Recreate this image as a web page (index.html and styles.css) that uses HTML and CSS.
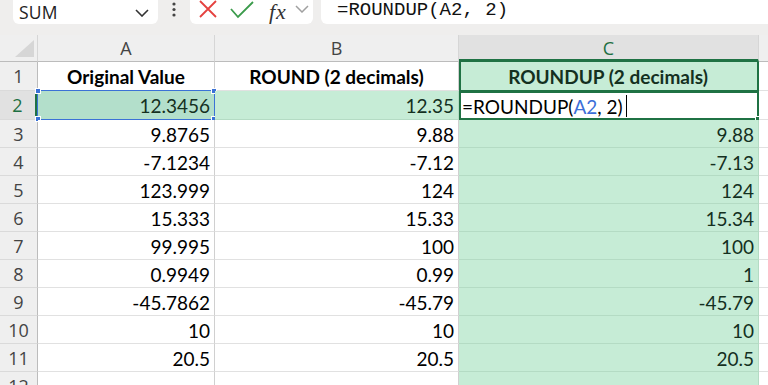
FILE: index.html
```html
<!DOCTYPE html>
<html>
<head>
<meta charset="utf-8">
<link rel="stylesheet" href="styles.css">
</head>
<body>
<div class="app">
  <div class="toolbar">
    <div class="namebox">
      <span class="nb-text">SUM</span>
      <svg class="nb-chev" width="14" height="8" viewBox="0 0 14 8"><polyline points="1,1 7,7 13,1" fill="none" stroke="#333" stroke-width="1.6"/></svg>
    </div>
    <div class="dots">
      <svg width="4" height="16" viewBox="0 0 4 16"><circle cx="2" cy="3" r="1.6" fill="#444"/><circle cx="2" cy="8.5" r="1.6" fill="#444"/><circle cx="2" cy="14" r="1.6" fill="#444"/></svg>
    </div>
    <div class="fxbox">
      <svg class="ic-x" width="18" height="18" viewBox="0 0 18 18"><path d="M1 1 L17 17 M17 1 L1 17" stroke="#e5413e" stroke-width="1.8" fill="none"/></svg>
      <svg class="ic-check" width="24" height="18" viewBox="0 0 24 18"><polyline points="1,8 8,16 23,1" fill="none" stroke="#3b9b4b" stroke-width="1.8"/></svg>
      <span class="fx">fx</span>
      <svg class="ic-chev" width="14" height="8" viewBox="0 0 14 8"><polyline points="1,1 7,7 13,1" fill="none" stroke="#a0a0a0" stroke-width="1.5"/></svg>
    </div>
    <div class="formula"><span class="f-text">=ROUNDUP(A2, 2)</span></div>
  </div>

  <div class="sheet">
    <div class="corner"><div class="tri"></div></div>
    <div class="colh">A</div>
    <div class="colh">B</div>
    <div class="colh colh-sel">C</div>
    <div class="colh colh-last"></div>

    <div class="rowh">1</div>
    <div class="cell hdr">Original Value</div>
    <div class="cell hdr">ROUND (2 decimals)</div>
    <div class="cell hdr mint c1">ROUNDUP (2 decimals)</div>
    <div class="cell dcol"></div>

    <div class="rowh rowh-sel">2</div>
    <div class="cell num a2">12.3456<span class="h h-tl"></span><span class="h h-tr"></span><span class="h h-bl"></span><span class="h h-br"></span></div>
    <div class="cell num mint">12.35</div>
    <div class="cell edit">=ROUNDUP(<span class="ref">A2</span>, 2)<span class="caret"></span><span class="fill"></span></div>
    <div class="cell dcol"></div>

    <div class="rowh">3</div><div class="cell num">9.8765</div><div class="cell num">9.88</div><div class="cell num mint">9.88</div><div class="cell dcol"></div>
    <div class="rowh">4</div><div class="cell num">-7.1234</div><div class="cell num">-7.12</div><div class="cell num mint">-7.13</div><div class="cell dcol"></div>
    <div class="rowh">5</div><div class="cell num">123.999</div><div class="cell num">124</div><div class="cell num mint">124</div><div class="cell dcol"></div>
    <div class="rowh">6</div><div class="cell num">15.333</div><div class="cell num">15.33</div><div class="cell num mint">15.34</div><div class="cell dcol"></div>
    <div class="rowh">7</div><div class="cell num">99.995</div><div class="cell num">100</div><div class="cell num mint">100</div><div class="cell dcol"></div>
    <div class="rowh">8</div><div class="cell num">0.9949</div><div class="cell num">0.99</div><div class="cell num mint">1</div><div class="cell dcol"></div>
    <div class="rowh">9</div><div class="cell num">-45.7862</div><div class="cell num">-45.79</div><div class="cell num mint">-45.79</div><div class="cell dcol"></div>
    <div class="rowh">10</div><div class="cell num">10</div><div class="cell num">10</div><div class="cell num mint">10</div><div class="cell dcol"></div>
    <div class="rowh">11</div><div class="cell num">20.5</div><div class="cell num">20.5</div><div class="cell num mint">20.5</div><div class="cell dcol"></div>
    <div class="rowh">12</div><div class="cell num"></div><div class="cell num"></div><div class="cell num mint"></div><div class="cell dcol"></div>
  </div>
</div>
</body>
</html>
```

FILE: styles.css
```css
* { box-sizing: border-box; }
html, body { margin: 0; padding: 0; }
body {
  width: 768px;
  height: 385px;
  overflow: hidden;
  background: #ffffff;
  font-family: "Open Sans", "Noto Sans", sans-serif;
}
.app { width: 768px; height: 385px; overflow: hidden; }

.toolbar {
  height: 35px;
  background: #efeeed;
  display: flex;
  align-items: flex-start;
}
.namebox {
  margin-left: 13px;
  margin-top: -6px;
  width: 145px;
  height: 30px;
  padding-top: 6px;
  background: #ffffff;
  border-radius: 6px;
  display: flex;
  align-items: center;
}
.nb-text {
  margin-left: 6px;
  font-size: 17.5px;
  color: #222;
  letter-spacing: 0.2px;
}
.nb-chev { margin-left: auto; margin-right: 9px; margin-top: 1px; }
.dots {
  width: 32px;
  height: 24px;
  display: flex;
  align-items: flex-start;
  justify-content: center;
  padding-top: 1px;
}
.fxbox {
  width: 123px;
  margin-top: -6px;
  height: 30px;
  padding-top: 6px;
  background: #ffffff;
  border-radius: 6px;
  display: flex;
  align-items: center;
}
.ic-x { margin-left: 9px; margin-top: -7px; }
.ic-check { margin-left: 13px; margin-top: -5px; }
.fx {
  margin-left: 15px;
  margin-top: 0;
  font-family: "Liberation Serif", serif;
  font-style: italic;
  font-size: 22px;
  line-height: 22px;
  color: #333;
  letter-spacing: 1px;
}
.ic-chev { margin-left: 8px; margin-top: -6px; }
.formula {
  margin-left: 8px;
  margin-top: -6px;
  flex: 1;
  height: 30px;
  padding-top: 6px;
  background: #ffffff;
  border-radius: 6px 0 0 6px;
  display: flex;
  align-items: center;
}
.f-text {
  margin-left: 16px;
  margin-top: -5px;
  font-family: "Liberation Mono", monospace;
  font-size: 19px;
  color: #111;
}

.sheet {
  display: grid;
  grid-template-columns: 38px 177px 244px 300px 9px;
  grid-template-rows: 27px 29px 29px 28px 28px 28px 28px 28px 28px 28px 28px 28px 28px;
  font-family: "Lato", "Open Sans", sans-serif;
  font-size: 19px;
}
.corner {
  background: #efefef;
  border-right: 1px solid #d6d6d6;
  border-bottom: 1px solid #bcbcbc;
  position: relative;
}
.tri {
  position: absolute;
  right: 3px;
  bottom: 4px;
  width: 0;
  height: 0;
  border-left: 19px solid transparent;
  border-bottom: 17px solid #d6d6d6;
}
.colh {
  background: #efefef;
  border-right: 1px solid #d6d6d6;
  border-bottom: 1px solid #bcbcbc;
  display: flex;
  align-items: center;
  justify-content: center;
  font-family: "Open Sans", sans-serif;
  font-size: 18px;
  color: #444;
}
.colh-sel {
  background: #e1e1e1;
  color: #1d6f42;
  border-bottom: 3px solid #1f7244;
  padding-top: 2px;
}
.colh-last { border-right: none; }
.rowh {
  background: #efefef;
  border-right: 1px solid #bcbcbc;
  border-bottom: 1px solid #dadada;
  display: flex;
  align-items: center;
  justify-content: center;
  font-family: "Open Sans", sans-serif;
  font-size: 18px;
  color: #444;
}
.rowh-sel {
  background: #e1e1e1;
  color: #1d6f42;
  border-right: 3px solid #1f7244;
}
.cell {
  background: #ffffff;
  border-right: 1px solid #d0d0d0;
  border-bottom: 1px solid #e1e1e1;
  display: flex;
  align-items: center;
  color: #000;
  white-space: nowrap;
  position: relative;
  padding: 1px 4px 0 4px;
}
.num { justify-content: flex-end; }
.hdr { justify-content: center; font-weight: 700; }
.mint {
  background: #c6ecd6;
  color: #14301f;
  border-bottom-color: #b4dbc4;
  border-right-color: #b4dbc4;
}
.c1 {
  border-left: 2px solid #1f7244;
  border-right: 2px solid #1f7244;
  border-bottom-color: #1f7244;
  padding-left: 2px;
}
.a2 {
  background: #b3dfcb;
  color: #14301f;
  border: 1px solid #3b72d6;
  margin: -1px 0 0 -1px;
}
.h {
  position: absolute;
  width: 6px;
  height: 6px;
  background: #3b72d6;
  border: 1px solid #ffffff;
}
.h-tl { left: -3px; top: -3px; }
.h-tr { right: -3px; top: -3px; }
.h-bl { left: -3px; bottom: -3px; }
.h-br { right: -3px; bottom: -3px; }
.edit {
  background: #ffffff;
  border: 2px solid #1f7244;
  padding-left: 1px;
  color: #000;
}
.ref { color: #3c6fd8; }
.caret {
  display: inline-block;
  width: 1px;
  height: 22px;
  background: #000;
  margin-left: 3px;
}
.fill {
  position: absolute;
  right: -4px;
  bottom: -4px;
  width: 6px;
  height: 6px;
  background: #1f7244;
  border: 1px solid #fff;
}
.dcol { border-right: none; }
```
